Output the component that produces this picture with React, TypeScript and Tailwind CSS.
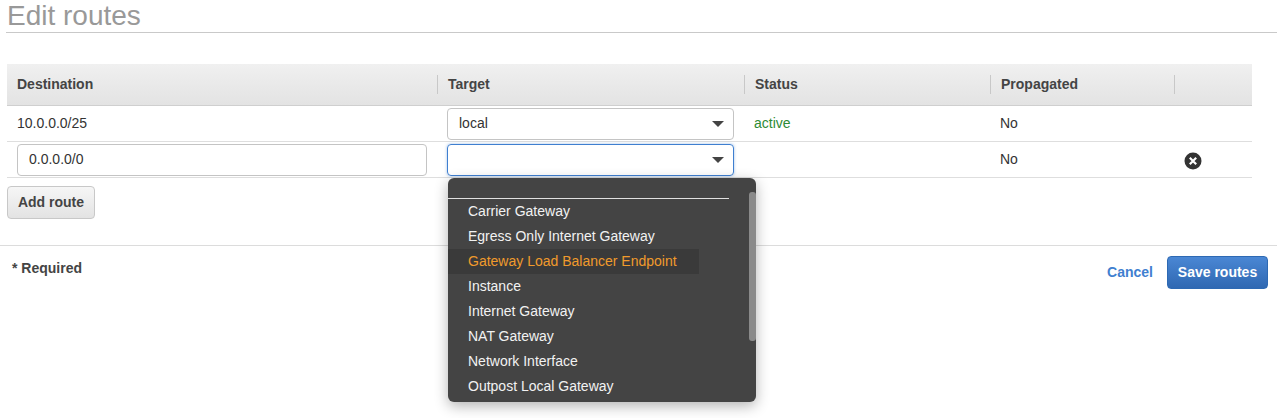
import React from "react";

const targets = [
  "Carrier Gateway",
  "Egress Only Internet Gateway",
  "Gateway Load Balancer Endpoint",
  "Instance",
  "Internet Gateway",
  "NAT Gateway",
  "Network Interface",
  "Outpost Local Gateway",
];

const Caret = () => <span className="w-0 h-0 border-x-[6px] border-x-transparent border-t-[6px] border-t-[#444]" />;

const HeaderCell = ({ label, divider = true }: { label?: string; divider?: boolean }) => (
  <div className="flex items-center h-full">
    {divider && <span className="w-px h-[19px] bg-[#c8c8c8] mr-[10px] shrink-0" />}
    {!divider && <span className="w-[10px]" />}
    <span className="font-bold text-[#444]">{label}</span>
  </div>
);

const App = () => {
  return (
    <div className="relative h-[418px] w-[1281px] overflow-hidden bg-white text-[14px] text-[#333] font-['Liberation_Sans',Arial,sans-serif]">
      {/* title */}
      <div className="ml-[6px] mr-[4px] h-[33px] border-b border-[#c9c9c9] pl-px text-[28px] leading-[31px] text-[#999]">
        Edit routes
      </div>

      {/* table */}
      <div className="mt-[31px] ml-[7px] w-[1245px]">
        <div className="grid grid-cols-[430px_307px_246px_184px_78px] h-[42px] border-b border-[#cfcfcf] bg-gradient-to-b from-[#f0f0f0] to-[#e3e3e3]">
          <HeaderCell label="Destination" divider={false} />
          <HeaderCell label="Target" />
          <HeaderCell label="Status" />
          <HeaderCell label="Propagated" />
          <HeaderCell />
        </div>
        <div className="grid grid-cols-[430px_307px_246px_184px_78px] h-[36px] items-center border-b border-[#dedede]">
          <div className="pl-[10px]">10.0.0.0/25</div>
          <div className="pl-[10px]">
            <div className="flex items-center justify-between w-[287px] h-[32px] px-[11px] pr-[9px] rounded-[4px] border border-[#c4c4c4]">
              <span>local</span>
              <Caret />
            </div>
          </div>
          <div className="pl-[10px] text-[#2e8b36]">active</div>
          <div className="pl-[10px]">No</div>
          <div />
        </div>
        <div className="grid grid-cols-[430px_307px_246px_184px_78px] h-[36px] items-center border-b border-[#dedede]">
          <div className="pl-[10px]">
            <div className="flex items-center w-[410px] h-[32px] pl-[11px] rounded-[4px] border border-[#c4c4c4]">0.0.0.0/0</div>
          </div>
          <div className="pl-[10px]">
            <div className="flex items-center justify-end w-[287px] h-[32px] pr-[9px] rounded-[4px] border border-[#3f7fd0] shadow-[0_0_3px_rgba(63,127,208,0.5)]">
              <Caret />
            </div>
          </div>
          <div />
          <div className="pl-[10px]">No</div>
          <div className="pl-[10px]">
            <svg width="18" height="18" viewBox="0 0 18 18" className="mt-[3px]">
              <circle cx="9" cy="9" r="8.5" fill="#333" />
              <path d="M5.8 5.8l6.4 6.4M12.2 5.8l-6.4 6.4" stroke="#fff" strokeWidth="2.2" />
            </svg>
          </div>
        </div>
        <button className="mt-[8px] w-[88px] h-[33px] rounded-[4px] border border-[#c8c8c8] bg-gradient-to-b from-[#f6f6f6] to-[#e3e3e3] font-bold text-[#444]">
          Add route
        </button>
      </div>

      {/* footer */}
      <div className="mt-[26px] mr-[4px] flex justify-between border-t border-[#dcdcdc] pt-[10px] pl-[12px] pr-[9px]">
        <span className="font-bold text-[#444] mt-[2px]">* Required</span>
        <div className="flex items-center gap-[14px]">
          <span className="font-bold text-[#3f7fd0]">Cancel</span>
          <button className="w-[101px] h-[33px] rounded-[4px] border border-[#2d69b3] bg-gradient-to-b from-[#4a87d4] to-[#2f68b2] font-bold text-white">
            Save routes
          </button>
        </div>
      </div>

      {/* open target menu */}
      <div className="absolute left-[448px] top-[178px] w-[308px] h-[224px] rounded-[6px] bg-[#444] shadow-[0_4px_14px_rgba(0,0,0,0.3)] overflow-hidden text-[#f2f2f2]">
        <div className="mt-[20px] w-[281px] h-px bg-[#e0e0e0]" />
        <div className="mt-[0px]">
          {targets.map((t) => (
            <div
              key={t}
              className={
                t === "Gateway Load Balancer Endpoint"
                  ? "w-[251px] h-[25px] pl-[20px] leading-[25px] bg-[#3a3a3a] text-[#f09a2c]"
                  : "h-[25px] pl-[20px] leading-[25px]"
              }
            >
              {t}
            </div>
          ))}
        </div>
        <div className="absolute left-[301px] top-[14px] w-[7px] h-[149px] rounded-[3px] bg-[#8a8a8a]" />
      </div>
    </div>
  );
};

export default App;
